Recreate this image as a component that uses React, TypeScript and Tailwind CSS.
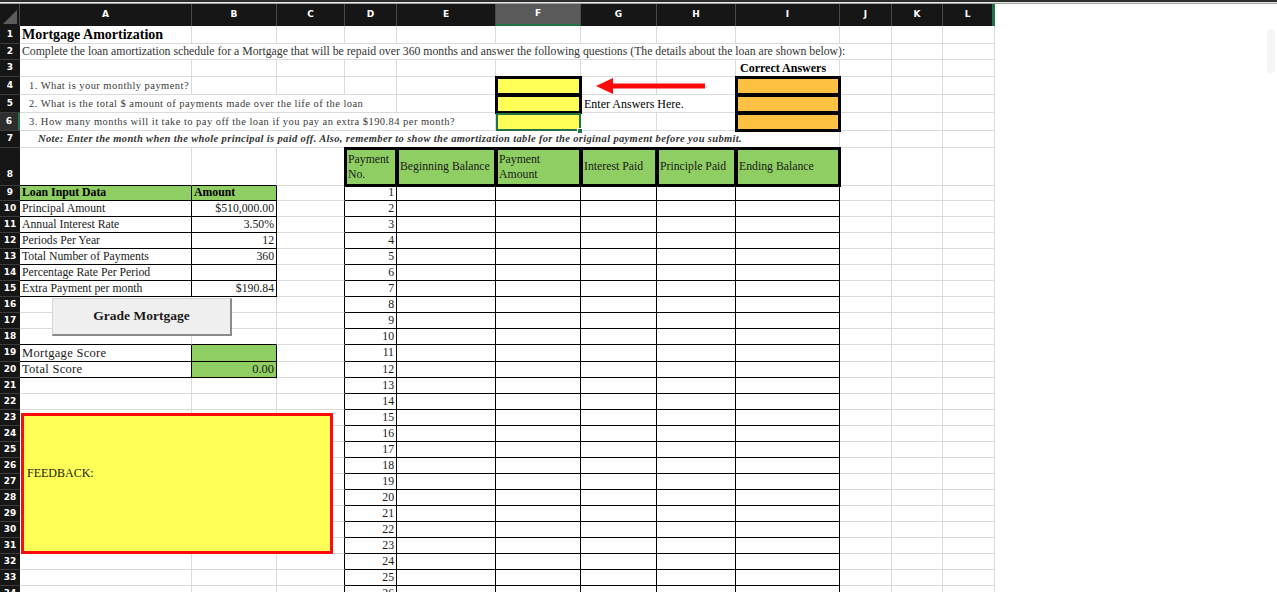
import { ReactNode } from "react"
import { twMerge } from "tailwind-merge"

const COLS = ["A", "B", "C", "D", "E", "F", "G", "H", "I", "J", "K", "L"]
const GRID = "grid grid-cols-[20px_172px_85px_68px_52px_99px_85px_76px_79px_104px_52px_51px_52px_1fr]"
const SPAN: Record<number, string> = {
  1: "col-span-1",
  2: "col-span-2",
  4: "col-span-4",
  5: "col-span-5",
  9: "col-span-9",
  10: "col-span-10",
}
const HEIGHT: Record<number, string> = {
  1: "h-[18px]",
  2: "h-[16px]",
  3: "h-[17px]",
  4: "h-[18px]",
  5: "h-[18px]",
  6: "h-[18px]",
  7: "h-[17px]",
  8: "h-[38px]",
  9: "h-[15px]",
  19: "h-[17px]",
}

type Cell = { span?: number; cls?: string; text?: ReactNode }
type Spec = Record<string, Cell>

const base =
  "flex items-center overflow-hidden whitespace-nowrap border-r border-b border-r-[#dadada] border-b-[#dadada] px-[2px] text-[11.75px] text-[#1a1a1a]"
const thick = "relative z-10 outline-solid outline-3 outline-black -outline-offset-2"
const green = "bg-[#8fce62]"
const yellow = "bg-[#ffff57]"
const orange = "bg-[#ffc142]"
const boxed = "border-r-black border-b-black"
const question = "pl-[9px] text-[10.5px] tracking-[0.45px] text-[#3a3a3a]"
const head = `${green} ${thick} pl-[3px] whitespace-normal leading-[15px]`

const top: Spec[] = [
  { A: { text: "Mortgage Amortization", cls: "font-bold text-[14px] text-black" } },
  {
    A: {
      span: 10,
      cls: "text-[#333]",
      text: "Complete the loan amortization schedule for a Mortgage that will be repaid over 360 months and answer the following questions (The details about the loan are shown below):",
    },
  },
  { I: { text: "Correct Answers", cls: "font-bold pl-[4px] text-[12px] text-black" } },
  {
    A: { text: "1. What is your monthly payment?", cls: question },
    F: { cls: `${yellow} ${thick}` },
    I: { cls: `${orange} ${thick}` },
  },
  {
    A: { span: 4, text: "2. What is the total $ amount of payments made over the life of the loan", cls: question },
    F: { cls: `${yellow} ${thick}` },
    G: { span: 2, text: "Enter Answers Here.", cls: "pl-[3px] text-[12px] text-black" },
    I: { cls: `${orange} ${thick}` },
  },
  {
    A: {
      span: 5,
      text: "3. How many months will it take to pay off the loan if you pay an extra $190.84 per month?",
      cls: question,
    },
    F: { cls: `${yellow} relative z-20 outline-solid outline-2 outline-[#217346] -outline-offset-2` },
    I: { cls: `${orange} ${thick}` },
  },
  {
    A: {
      span: 9,
      cls: "pl-[18px] text-[10.5px] font-bold italic tracking-[0.35px] text-[#333]",
      text: "Note: Enter the month when the whole principal is paid off. Also, remember to show the amortization table for the original payment before you submit.",
    },
  },
  {
    A: { cls: "border-b-black" },
    B: { cls: "border-b-black" },
    D: { cls: head, text: <>Payment<br />No.</> },
    E: { cls: head, text: "Beginning Balance" },
    F: { cls: head, text: <>Payment<br />Amount</> },
    G: { cls: head, text: "Interest Paid" },
    H: { cls: head, text: "Principle Paid" },
    I: { cls: head, text: "Ending Balance" },
  },
]

const loan: Record<number, [string, string]> = {
  9: ["Loan Input Data", "Amount"],
  10: ["Principal Amount", "$510,000.00"],
  11: ["Annual Interest Rate", "3.50%"],
  12: ["Periods Per Year", "12"],
  13: ["Total Number of Payments", "360"],
  14: ["Percentage Rate Per Period", ""],
  15: ["Extra Payment per month", "$190.84"],
}

function bodySpec(n: number): Spec {
  const s: Spec = {
    C: { cls: "border-r-black" },
    D: { text: n - 8, cls: `justify-end ${boxed}` },
    E: { cls: boxed },
    F: { cls: boxed },
    G: { cls: boxed },
    H: { cls: boxed },
    I: { cls: boxed },
  }
  const l = loan[n]
  if (l) {
    const hd = n === 9 ? `${green} font-bold text-black` : ""
    s.A = { text: l[0], cls: `${boxed} ${hd}` }
    s.B = { text: l[1], cls: `${boxed} ${hd} ${n === 9 ? "" : "justify-end"}` }
  }
  if (n === 18) {
    s.A = { cls: "border-b-black" }
    s.B = { cls: "border-b-black" }
  }
  if (n === 19 || n === 20) {
    s.A = { text: n === 19 ? "Mortgage Score" : "Total Score", cls: `${boxed} text-[12.5px] tracking-[0.3px]` }
    s.B = { text: n === 20 ? "0.00" : "", cls: `${boxed} ${green} justify-end text-[12.5px]` }
  }
  return s
}

function Row({ n, spec }: { n: number; spec: Spec }) {
  const cells: ReactNode[] = []
  for (let i = 0; i < COLS.length; ) {
    const c = spec[COLS[i]] ?? {}
    const span = c.span ?? 1
    cells.push(
      <div key={COLS[i]} className={twMerge(base, SPAN[span], c.cls)}>
        {c.text}
      </div>
    )
    i += span
  }
  const active = n === 6
  return (
    <div className={twMerge(GRID, HEIGHT[n] ?? "h-[16px]")}>
      <div
        className={twMerge(
          "flex items-center justify-center leading-none bg-[#161616] border-b border-b-[#3c3c3c] font-['DejaVu_Sans',sans-serif] text-[9px] font-bold text-white",
          n === 8 && "items-end pb-[4px]",
          active && "bg-[#2e2e2e] border-r-2 border-r-[#217346]"
        )}
      >
        {n}
      </div>
      {cells}
      <div />
    </div>
  )
}

function Header() {
  return (
    <div className={`${GRID} h-[22px]`}>
      <div className="relative bg-[#161616] border-r border-r-[#4a4a4a]">
        <svg className="absolute right-[2px] bottom-[2px]" width="14" height="14" viewBox="0 0 14 14">
          <polygon points="14,0 14,14 0,14" fill="#5c5c5c" />
        </svg>
      </div>
      {COLS.map((c) => (
        <div
          key={c}
          className={twMerge(
            "flex items-center justify-center bg-[#161616] border-r border-r-[#4a4a4a] font-['DejaVu_Sans',sans-serif] text-[9px] font-bold text-white",
            c === "F" && "bg-[#5a5a5a] border-b-2 border-b-[#217346]",
            c === "L" && "border-r-[3px] border-r-[#217346]"
          )}
        >
          {c}
        </div>
      ))}
      <div />
    </div>
  )
}

export default function App() {
  const body: number[] = []
  for (let n = 9; n <= 34; n++) body.push(n)

  return (
    <div className="relative w-[1277px] h-[592px] overflow-hidden bg-white font-['Liberation_Serif',serif]">
      <div className="h-[2px] bg-[#2e2e2e]" />
      <div className="h-[1px] bg-[#e2e2e2]" />
      <div className="h-[1px] bg-[#a5a5a5]" />
      <Header />
      {top.map((spec, i) => (
        <Row key={i} n={i + 1} spec={spec} />
      ))}
      {body.map((n) => (
        <Row key={n} n={n} spec={bodySpec(n)} />
      ))}

      {/* red arrow pointing at the answer cells */}
      <svg className="absolute left-[596px] top-[78px]" width="110" height="16" viewBox="0 0 110 16">
        <polygon points="0,8 17,0 17,16" fill="#ff0a0a" />
        <rect x="16" y="5.5" width="93" height="5" fill="#ff0a0a" />
      </svg>

      {/* fill handle of the selected cell */}
      <div className="absolute left-[577px] top-[128px] z-30 w-[6px] h-[6px] bg-[#217346] border border-white" />

      <button className="absolute left-[52px] top-[298px] w-[180px] h-[38px] flex items-center justify-center bg-[#efefef] border-t border-l border-t-[#d4d4d4] border-l-[#d4d4d4] border-r-2 border-b-2 border-r-[#8a8a8a] border-b-[#8a8a8a] text-[13.5px] font-bold text-[#1a1a1a]">
        Grade Mortgage
      </button>

      <div className="absolute left-[21px] top-[413px] w-[312px] h-[141px] bg-[#ffff57] border-[3px] border-[#ff0a0a] pl-[3px] pt-[48px] text-[12px] text-[#1a1a1a]">
        FEEDBACK:
      </div>

      <div className="absolute right-[2px] top-[29px] w-[8px] h-[44px] rounded bg-[#f5f5f5]" />
    </div>
  )
}
